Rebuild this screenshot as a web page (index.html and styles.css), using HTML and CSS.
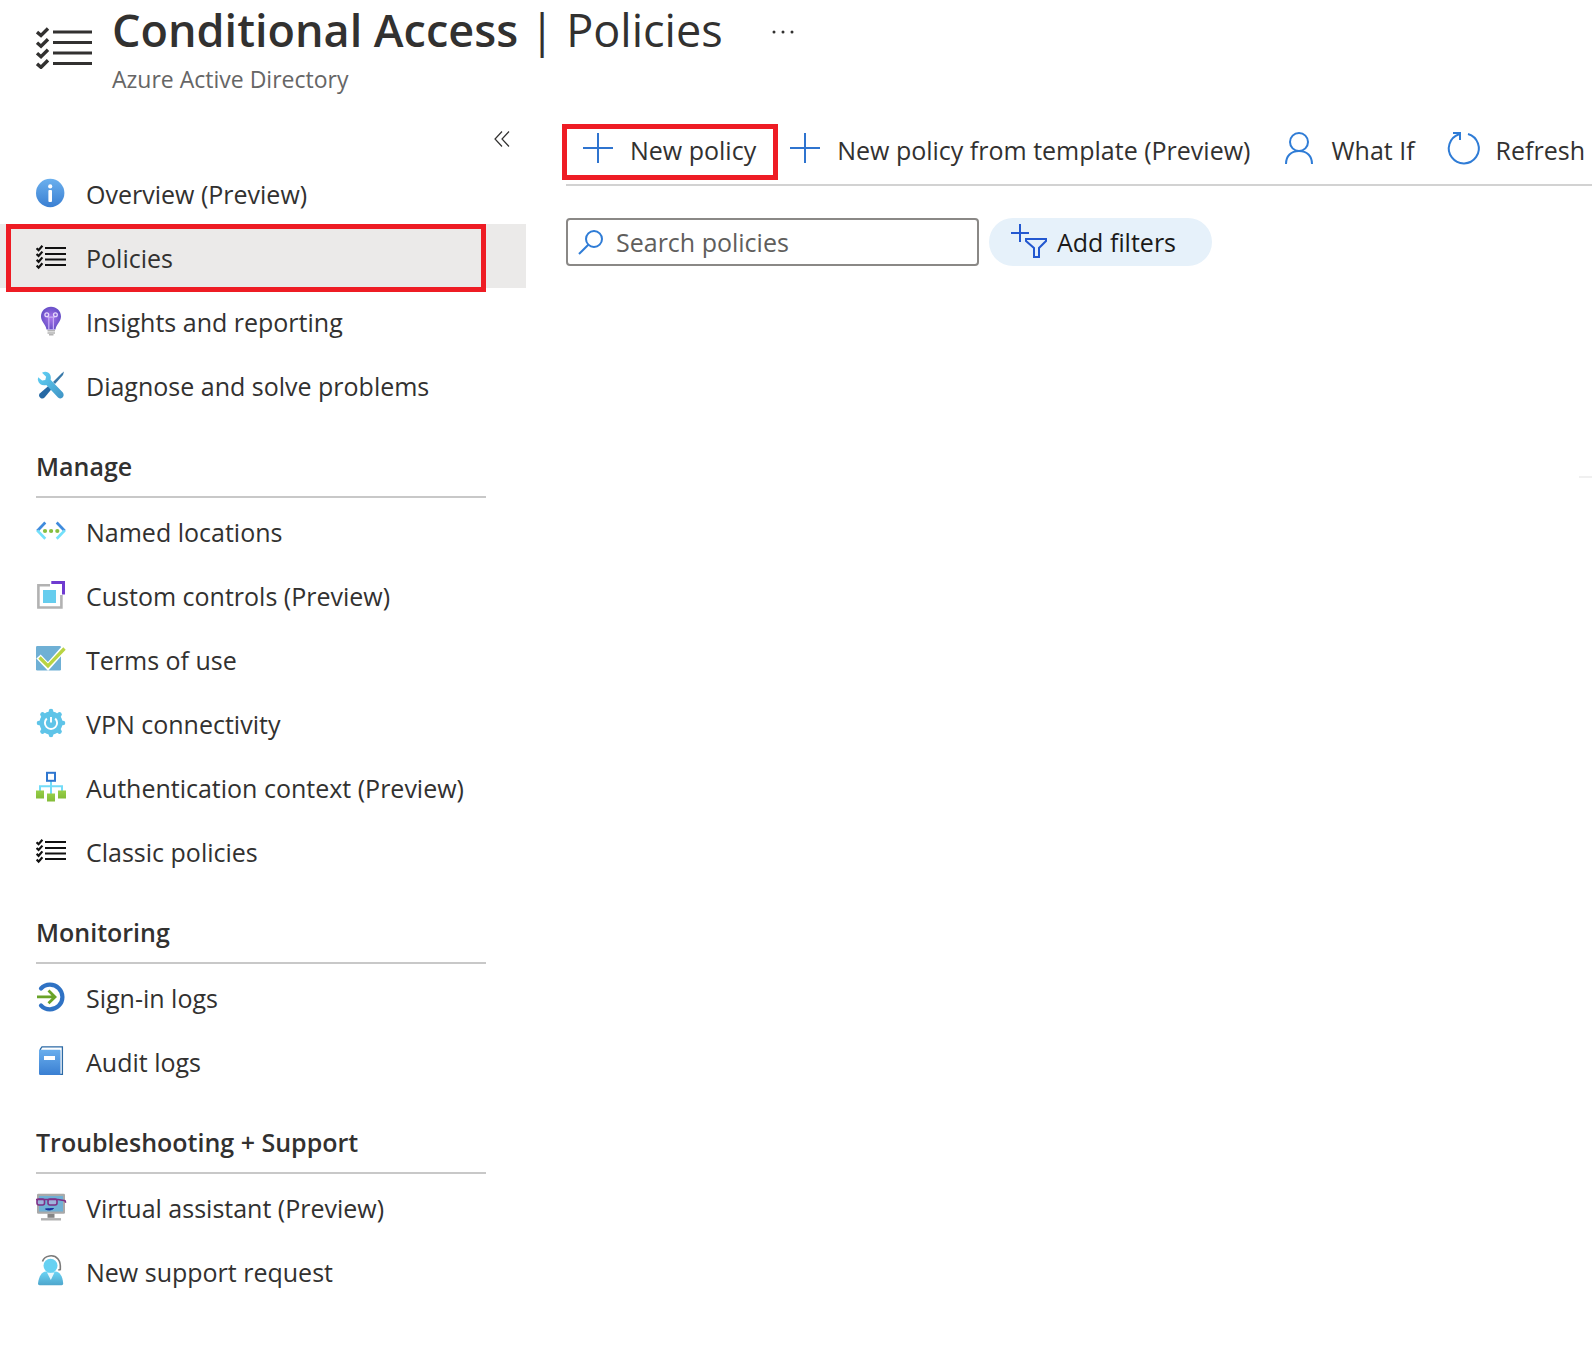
FILE: index.html
```html
<!DOCTYPE html>
<html lang="en">
<head>
<meta charset="utf-8">
<title>Conditional Access | Policies</title>
<link rel="stylesheet" href="styles.css">
</head>
<body>
<svg class="defs" aria-hidden="true">
  <defs>
    <linearGradient id="blue" x1="0" y1="0" x2="0" y2="1"><stop offset="0" stop-color="#6bb0ee"/><stop offset="1" stop-color="#3a7fd2"/></linearGradient>
    <linearGradient id="cyan" x1="0" y1="0" x2="0" y2="1"><stop offset="0" stop-color="#6ad4f5"/><stop offset="1" stop-color="#4fa6cc"/></linearGradient>
    <linearGradient id="wrench" x1="0" y1="0" x2="1" y2="1"><stop offset="0" stop-color="#62d3f7"/><stop offset="1" stop-color="#3f93c4"/></linearGradient>
    <linearGradient id="green" x1="0" y1="0" x2="0" y2="1"><stop offset="0" stop-color="#96cf48"/><stop offset="1" stop-color="#83bb38"/></linearGradient>
    <radialGradient id="purple"><stop offset="0" stop-color="#a974ea"/><stop offset="1" stop-color="#6950c8"/></radialGradient>
    <symbol id="checklist" viewBox="0 0 30 32">
      <path d="M9 8h21M9 14h21M9 19.500h21M9 25h21" stroke="#111" stroke-width="2"/>
      <path d="M.6 8.200l2 2 3.800-4.400M.6 14l2 2 3.800-4.400M.6 19.800l2 2 3.800-4.400M.6 25.600l2 2 3.800-4.400" fill="none" stroke="#111" stroke-width="2.200"/>
    </symbol>
  </defs>
</svg>

<header class="page-header">
  <svg class="page-icon" viewBox="0 0 56 42" aria-hidden="true">
    <path d="M17 5h39M17 15.500h39M17 26h39M17 36.500h39" stroke="#323130" stroke-width="3.200"/>
    <path d="M1 5l4 3.500 7-7M1 15.700l4 3.500 7-7M1 26.200l4 3.500 7-7M1 36.800l4 3.500 7-7" fill="none" stroke="#323130" stroke-width="3.400"/>
  </svg>
  <div>
    <div class="title-row">
      <h1 class="title"><b>Conditional Access</b> | Policies</h1>
      <button class="more" type="button" aria-label="More"><svg width="24" height="6" viewBox="0 0 24 6"><g fill="#323130"><circle cx="3" cy="3" r="1.500"/><circle cx="12" cy="3" r="1.500"/><circle cx="21" cy="3" r="1.500"/></g></svg></button>
    </div>
    <p class="subtitle">Azure Active Directory</p>
  </div>
</header>

<div class="layout">
  <nav class="sidebar">
    <div class="collapse-row">
      <button class="collapse" type="button" aria-label="Collapse menu"><svg width="16" height="16" viewBox="0 0 16 16" fill="none" stroke="#323130" stroke-width="1.200"><path d="M8 .5L1 8l7 7.500M15 .5L8 8l7 7.500"/></svg></button>
    </div>
    <ul class="menu">
      <li><a class="item" href="#"><svg class="icon" viewBox="0 0 30 32" aria-hidden="true"><circle cx="14.200" cy="17" r="14.200" fill="url(#blue)"/><circle cx="14.200" cy="10.400" r="2.100" fill="#fff"/><rect x="12.400" y="14" width="3.600" height="12" rx="1" fill="#fff"/></svg>Overview (Preview)</a></li>
      <li><a class="item selected" href="#" aria-current="page"><svg class="icon" aria-hidden="true"><use href="#checklist"/></svg>Policies</a></li>
      <li><a class="item" href="#"><svg class="icon" viewBox="0 0 30 32" aria-hidden="true"><path d="M15 2.800c5.700 0 10 4.300 10 9.600 0 5.300-4.800 7.600-5.500 13h-9C9.800 20 5 17.700 5 12.400c0-5.300 4.300-9.600 10-9.600z" fill="url(#purple)"/><path d="M12.800 25.500v-13M17.400 25.500v-13M11.500 13.200h7.200" stroke="#c9aef5" stroke-width="1.200"/><g fill="none" stroke="#e6d8fb" stroke-width="1.300"><circle cx="10.800" cy="10.700" r="1.900"/><circle cx="19.400" cy="10.700" r="1.900"/></g><path d="M11.500 26.700h7.500M11.500 28.900h7.500M13 30.700h4.500" stroke="#b3b3b3" stroke-width="1.500"/></svg>Insights and reporting</a></li>
      <li><a class="item" href="#"><svg class="icon" viewBox="0 0 30 32" aria-hidden="true"><path d="M28 3.500l-1 3.500-8 9-2-2 8.500-8.500z" fill="#3879a9"/><path d="M13.500 17l3 3-7.700 9.300c-1.800 1.900-3.900 1.200-5-.1-1-1.200-1.200-2.700.2-4z" fill="#2669a4"/><path d="M6 4.800C9 3 12.500 3.800 14 6.500c1 1.800 1 3.600.6 5.300l12 12.500c3 3.600-1 8-4.600 5.200L10.300 17c-4 1-7.600-.8-8.500-5.300l.3-2.400 4 3.200 3.200-.5.800-3.200z" fill="url(#wrench)"/></svg>Diagnose and solve problems</a></li>
    </ul>

    <h2 class="group">Manage</h2>
    <ul class="menu">
      <li><a class="item" href="#"><svg class="icon" viewBox="0 0 30 32" aria-hidden="true"><g fill="none" stroke-width="2.700"><path d="M9.300 8.500L1.200 17" stroke="#3f8bdd"/><path d="M1.200 16.400l8.100 8.400" stroke="#73e0fa"/><path d="M20.700 8.500l8.100 8.500" stroke="#3f8bdd"/><path d="M28.800 16.400l-8.100 8.400" stroke="#73e0fa"/></g><g fill="#86be3f"><circle cx="9" cy="17" r="2.100"/><circle cx="15.100" cy="17" r="2.100"/><circle cx="21.300" cy="17" r="2.100"/></g></svg>Named locations</a></li>
      <li><a class="item" href="#"><svg class="icon" viewBox="0 0 30 32" aria-hidden="true"><path d="M14 7.200H2.400v22.300h23V17" fill="none" stroke="#b2b2b2" stroke-width="2.600"/><rect x="7" y="12" width="13" height="13" fill="#66cdee"/><path d="M15.300 4.400h12.200V16.500" fill="none" stroke="#6f3bd0" stroke-width="3"/></svg>Custom controls (Preview)</a></li>
      <li><a class="item" href="#"><svg class="icon" viewBox="0 0 30 32" aria-hidden="true"><rect y="4" width="25" height="24.500" rx="1.300" fill="#6fb0d5"/><path d="M2.500 14.500L12 24.500 27 7.500" fill="none" stroke="#fff" stroke-width="6"/><path d="M3.500 15.500L12 24 28.500 6.500" fill="none" stroke="#b9d443" stroke-width="3.300"/></svg>Terms of use</a></li>
      <li><a class="item" href="#"><svg class="icon" viewBox="0 0 30 32" aria-hidden="true"><circle cx="15" cy="17" r="11.500" fill="#5fc4e8"/><path d="M15 5v24M3 17h24M6.500 8.500l17 17M23.500 8.500l-17 17" stroke="#5fc4e8" stroke-width="4.600" stroke-linecap="round"/><path d="M10.800 12.500a6.100 6.100 0 1 0 8.400 0M15 11v5.500" fill="none" stroke="#fff" stroke-width="1.900"/></svg>VPN connectivity</a></li>
      <li><a class="item" href="#"><svg class="icon" viewBox="0 0 30 32" aria-hidden="true"><path d="M15 11v13M4 22v-5.700h22V22" fill="none" stroke="#73dcf8" stroke-width="2"/><rect x="11" y="2.800" width="8" height="8" fill="#fff" stroke="#2f77d0" stroke-width="2"/><g fill="url(#green)"><rect y="20.500" width="8" height="8"/><rect x="11" y="23.500" width="8" height="8"/><rect x="22" y="20.500" width="8" height="8"/></g></svg>Authentication context (Preview)</a></li>
      <li><a class="item" href="#"><svg class="icon" aria-hidden="true"><use href="#checklist"/></svg>Classic policies</a></li>
    </ul>

    <h2 class="group">Monitoring</h2>
    <ul class="menu">
      <li><a class="item" href="#"><svg class="icon" viewBox="0 0 30 32" aria-hidden="true"><path d="M5 8.500A12.400 12.400 0 1 1 5 25.500" fill="none" stroke="#2f72c4" stroke-width="4.200" stroke-linecap="round"/><path d="M1 16.900h18M12.500 10.500l6.500 6.400-6.500 6.400" fill="none" stroke="#69a329" stroke-width="2.800"/></svg>Sign-in logs</a></li>
      <li><a class="item" href="#"><svg class="icon" viewBox="0 0 30 32" aria-hidden="true"><path d="M6 2.800h20.400v27.500H4.500V5z" fill="#fff" stroke="#2c6aa5" stroke-width="1.300"/><path d="M3 4.800c0 1 1 .9 2 .9h18.500c.7 0 1 .4 1 1V31H4.500C3.600 31 3 30.400 3 29.500z" fill="url(#blue)"/><rect x="8" y="12" width="11" height="4" fill="#fff"/></svg>Audit logs</a></li>
    </ul>

    <h2 class="group">Troubleshooting + Support</h2>
    <ul class="menu">
      <li><a class="item" href="#"><svg class="icon" viewBox="0 0 30 32" aria-hidden="true"><rect x="1" y="3.800" width="28" height="20" rx="1.200" fill="#a9a9a9"/><rect x="3" y="6" width="24" height="15.500" fill="#6fb0d5"/><path d="M11.500 23.800h7v4h-7z" fill="#858585"/><path d="M5 29.300h20" stroke="#b0b0b0" stroke-width="2.400"/><g fill="#9fb3dc" stroke="#7e2f86" stroke-width="1.600"><rect x="1" y="9" width="7.500" height="6" rx="2"/><rect x="12" y="9" width="9" height="6" rx="2"/></g><path d="M0 9.500h22l7 1.200.7 2" fill="none" stroke="#7e2f86" stroke-width="1.600"/><path d="M9.500 19c2.500 1.500 5.500 1.300 8-.5l-4 .2z" fill="#152c9b" stroke="#152c9b"/></svg>Virtual assistant (Preview)</a></li>
      <li><a class="item" href="#"><svg class="icon" viewBox="0 0 30 32" aria-hidden="true"><path d="M2 29.500C3 22 5.500 18 10 17.500h9.500C24 18 26.500 22 27.200 29.500c0 1-.6 1.700-1.600 1.700h-22C2.600 31.200 2 30.500 2 29.500z" fill="url(#cyan)"/><path d="M11 18.500h7.500L14.800 26z" fill="#e9f7fc"/><circle cx="14.500" cy="11.700" r="7" fill="#66d1f2"/><path d="M6.500 7.500c2-6.500 11.500-7.500 15.500-2.500 2.500 3 2.600 6.500 2.300 10.500l-2 .5" fill="none" stroke="#7a7a7a" stroke-width="1.600"/></svg>New support request</a></li>
    </ul>
  </nav>

  <main class="content">
    <div class="toolbar">
      <button class="command marked" type="button"><svg class="icon" viewBox="0 0 30 32" fill="none" stroke="#2f74cf" stroke-width="2" aria-hidden="true"><path d="M0 16h30M15 1v30"/></svg>New policy</button>
      <button class="command" type="button"><svg class="icon" viewBox="0 0 30 32" fill="none" stroke="#2f74cf" stroke-width="2" aria-hidden="true"><path d="M0 16h30M15 1v30"/></svg>New policy from template (Preview)</button>
      <button class="command" type="button"><svg class="icon" viewBox="0 0 30 32" fill="none" stroke="#2f7cd6" stroke-width="2" aria-hidden="true"><circle cx="15" cy="10" r="9"/><path d="M2 32c0-8 5-13 13-13s13 5 13 13"/></svg>What If</button>
      <button class="command" type="button"><svg class="icon" viewBox="0 0 30 32" fill="none" stroke="#2f7cd6" stroke-width="2" aria-hidden="true"><path d="M19 2A15 15 0 1 1 10 2.200M4 1h7v7"/></svg>Refresh</button>
    </div>
    <div class="filters">
      <label class="search">
        <svg width="26" height="26" viewBox="0 0 26 26" fill="none" stroke="#2f7cd6" stroke-width="2" aria-hidden="true"><circle cx="16" cy="10" r="8"/><path d="M10.300 15.700L1 25"/></svg>
        <input class="search-input" type="text" placeholder="Search policies" aria-label="Search policies">
      </label>
      <button class="pill" type="button"><svg width="36" height="36" viewBox="0 0 36 36" fill="none" stroke="#2358d0" stroke-width="2" aria-hidden="true"><path d="M0 9h18M9 0v18M15 15h20v2l-7 7v9h-5v-9l-8-7z"/></svg>Add filters</button>
    </div>
    <div class="rest"></div>
  </main>
</div>
</body>
</html>
```
FILE: styles.css
```css
* {
  box-sizing: border-box;
}

body {
  margin: 0;
  background: #fff;
  color: #323130;
  font: 25px/36px "Open Sans", "Noto Sans", sans-serif;
}

button {
  padding: 0;
  border: 0;
  background: none;
  color: inherit;
  font: inherit;
}

svg {
  display: block;
  flex: none;
}

.defs {
  position: absolute;
  width: 0;
  height: 0;
}

.page-header {
  display: flex;
  gap: 20px;
  padding: 0 36px 18px;
}

.page-icon {
  width: 56px;
  height: 42px;
  margin-top: 27px;
}

.title-row {
  display: flex;
  align-items: center;
  gap: 48px;
}

.title {
  margin: 0;
  font-size: 45px;
  font-weight: 400;
  line-height: 60px;
  white-space: nowrap;
}

.title b {
  font-weight: 600;
}

.more {
  padding-top: 4px;
}

.subtitle {
  margin: 0;
  color: #666;
  font-size: 23px;
  line-height: 38px;
}

.layout {
  display: grid;
  grid-template-columns: 526px minmax(0, 1fr);
  column-gap: 40px;
}

.collapse-row {
  display: flex;
  justify-content: flex-end;
  height: 44px;
  padding: 15px 16px 0 0;
}

.collapse {
  height: 16px;
}

.menu {
  margin: 0;
  padding: 0;
  list-style: none;
}

.item {
  position: relative;
  display: flex;
  align-items: center;
  gap: 20px;
  height: 64px;
  padding: 4px 0 0 36px;
  color: inherit;
  text-decoration: none;
  white-space: nowrap;
}

.icon {
  width: 30px;
  height: 32px;
  margin-bottom: 4px;
  overflow: visible;
}

.selected {
  background: #ebeae9;
}

.selected::after {
  content: "";
  position: absolute;
  inset: 0 40px -4px 6px;
  border: 5px solid #ee1c24;
}

.group {
  margin: 32px 40px 0 36px;
  padding-bottom: 12px;
  border-bottom: 2px solid #c8c8c8;
  font-size: 25px;
  font-weight: 600;
  line-height: 36px;
}

.toolbar {
  display: flex;
  height: 70px;
  border-bottom: 2px solid #d2d2d2;
}

.command {
  position: relative;
  display: flex;
  align-items: center;
  gap: 17px;
  padding: 0 17px;
  white-space: nowrap;
}

.marked::after {
  content: "";
  position: absolute;
  inset: 8px -5px 4px -4px;
  border: 5px solid #ee1c24;
}

.filters {
  display: flex;
  gap: 10px;
  padding-top: 32px;
}

.search {
  display: flex;
  align-items: center;
  gap: 12px;
  width: 413px;
  height: 48px;
  padding: 0 10px;
  border: 2px solid #8a8886;
  border-radius: 4px;
}

.search-input {
  flex: 1;
  min-width: 0;
  padding: 0;
  border: 0;
  outline: 0;
  background: none;
  color: inherit;
  font: inherit;
}

.search-input::placeholder {
  color: #605e5c;
  opacity: 1;
}

.pill {
  display: flex;
  align-items: center;
  gap: 10px;
  height: 48px;
  padding: 0 36px 0 22px;
  border-radius: 24px;
  background: #e6f1fa;
  color: #1b1a19;
}

.rest {
  width: 13px;
  height: 2px;
  margin: 210px 0 0 auto;
  background: #f0f0f0;
}
```
